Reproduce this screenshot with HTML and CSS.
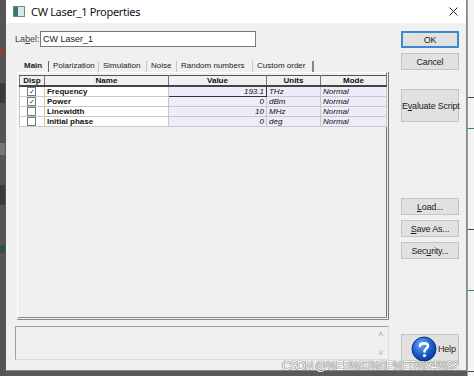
FILE: index.html
```html
<!DOCTYPE html>
<html>
<head>
    <title>CW Laser_1 Properties</title>
    <link rel="stylesheet" href="styles.css">
</head>
<body>
<div class="screen">
    <div class="side-left">
        <span class="mark m1"></span>
        <span class="mark m2"></span>
        <span class="mark m3"></span>
        <span class="mark m4"></span>
        <span class="mark m5"></span>
    </div>

    <div class="dialog">
        <div class="titlebar">
            <span class="app-icon"><span></span></span>
            <span class="title">CW Laser_1 Properties</span>
            <svg class="close" width="9" height="9" viewBox="0 0 9 9">
                <path d="M0.5 0.5 L8.5 8.5 M8.5 0.5 L0.5 8.5" stroke="#222" stroke-width="1"/>
            </svg>
        </div>

        <div class="dlg-body">
            <div class="main-col">
                <div class="label-row">
                    <label for="lbl">La<u>b</u>el:</label>
                    <input type="text" id="lbl" class="label-input" value="CW Laser_1">
                </div>

                <div class="tabs">
                    <span class="tab active t-main">Main</span>
                    <span class="tab t-pol">Polarization</span>
                    <span class="tab t-sim">Simulation</span>
                    <span class="tab t-noise">Noise</span>
                    <span class="tab t-rand">Random numbers</span>
                    <span class="tab last t-order">Custom order</span>
                </div>

                <div class="panel">
                    <table class="params">
                        <thead>
                            <tr>
                                <th class="c-disp">Disp</th>
                                <th class="c-name">Name</th>
                                <th class="c-value">Value</th>
                                <th class="c-units">Units</th>
                                <th class="c-mode">Mode</th>
                            </tr>
                        </thead>
                        <tbody>
                            <tr>
                                <td class="c-disp"><span class="chk on">&#x2713;</span></td>
                                <td class="c-name">Frequency</td>
                                <td class="c-value sel">193.1</td>
                                <td class="c-units">THz</td>
                                <td class="c-mode">Normal</td>
                            </tr>
                            <tr>
                                <td class="c-disp"><span class="chk on">&#x2713;</span></td>
                                <td class="c-name">Power</td>
                                <td class="c-value">0</td>
                                <td class="c-units">dBm</td>
                                <td class="c-mode">Normal</td>
                            </tr>
                            <tr>
                                <td class="c-disp"><span class="chk"></span></td>
                                <td class="c-name">Linewidth</td>
                                <td class="c-value">10</td>
                                <td class="c-units">MHz</td>
                                <td class="c-mode">Normal</td>
                            </tr>
                            <tr>
                                <td class="c-disp"><span class="chk"></span></td>
                                <td class="c-name">Initial phase</td>
                                <td class="c-value">0</td>
                                <td class="c-units">deg</td>
                                <td class="c-mode">Normal</td>
                            </tr>
                        </tbody>
                    </table>
                </div>

                <div class="message">
                    <div class="scroll">
                        <span>&#x2c4;</span>
                        <span>&#x2c5;</span>
                    </div>
                </div>
            </div>

            <div class="btn-col">
                <button type="button" class="btn ok">OK</button>
                <button type="button" class="btn cancel">Cancel</button>
                <button type="button" class="btn eval">E<u>v</u>aluate Script</button>
                <button type="button" class="btn load"><u>L</u>oad...</button>
                <button type="button" class="btn save"><u>S</u>ave As...</button>
                <button type="button" class="btn security">Sec<u>u</u>rity...</button>
                <button type="button" class="btn help">
                    <svg width="26" height="26" viewBox="0 0 26 26">
                        <defs>
                            <radialGradient id="hg" cx="40%" cy="30%" r="70%">
                                <stop offset="0" stop-color="#6fa8f2"/>
                                <stop offset="0.6" stop-color="#1e5fd0"/>
                                <stop offset="1" stop-color="#0b3a94"/>
                            </radialGradient>
                        </defs>
                        <circle cx="13" cy="13" r="12" fill="url(#hg)" stroke="#0a2f7a" stroke-width="1"/>
                        <path d="M9 10 C9 6.5 17 6.5 17 10 C17 12.5 13.5 12.5 13.5 15.5" fill="none" stroke="#fff" stroke-width="2.6" stroke-linecap="round"/>
                        <circle cx="13.5" cy="19.5" r="1.6" fill="#fff"/>
                    </svg>
                    <span>Help</span>
                </button>
            </div>
        </div>
        <div class="watermark">CSDN @%E5%90%8E%E5%84%92</div>
    </div>

    <div class="side-right">
        <span class="rline r1"></span>
        <span class="rline r2"></span>
        <span class="rline r3"></span>
        <span class="rline r4"></span>
        <span class="rline r5"></span>
    </div>
</div>
</body>
</html>
```

FILE: styles.css
```css
body {
    margin: 0;
    font-family: "Liberation Sans", Arial, sans-serif;
    background-color: #5a5a5a;
}

.screen {
    display: flex;
    width: 474px;
    height: 376px;
    overflow: hidden;
}

/* strips of the desktop behind the dialog */
.side-left {
    width: 6px;
    background-color: #555;
    display: flex;
    flex-direction: column;
}
.mark {
    display: block;
    width: 5px;
}
.m1 { height: 3px; margin-top: 50px; background: #b03030; }
.m2 { height: 20px; margin-top: 30px; background: #3a3a3a; }
.m3 { height: 12px; margin-top: 40px; background: #777; }
.m4 { height: 20px; margin-top: 30px; background: #3a3a3a; }
.m5 { height: 8px; margin-top: 40px; background: #2f4f4f; }

.side-right {
    width: 6px;
    background-color: #f4f4f4;
    border-left: 1px solid #999;
    display: flex;
    flex-direction: column;
}
.rline {
    display: block;
    height: 1px;
    background: #444;
}
.r1 { margin-top: 97px; }
.r2 { margin-top: 30px; background: #2a8a6a; }
.r3 { margin-top: 100px; }
.r4 { margin-top: 60px; background: #2a8a6a; }
.r5 { margin-top: 80px; }

.dialog {
    width: 461px;
    height: 370px;
    background-color: #f0f0f0;
    border-right: 1px solid #888;
    border-bottom: 1px solid #888;
    position: relative;
}

.titlebar {
    height: 23px;
    background-color: #fff;
    display: flex;
    align-items: center;
    font-family: "Noto Sans", "Open Sans", sans-serif;
    font-size: 11px;
    letter-spacing: -0.3px;
    color: #111;
}
.app-icon {
    width: 10px;
    height: 9px;
    margin-left: 7px;
    margin-right: 6px;
    border: 1px solid #6a8a8a;
    background: #d9e6e6;
    display: flex;
}
.app-icon span {
    width: 4px;
    background: #2e7a6e;
}
.title {
    flex: 1;
}
.close {
    margin-right: 8px;
}

.dlg-body {
    display: flex;
}

.main-col {
    width: 383px;
    padding-left: 9px;
}

.label-row {
    display: flex;
    align-items: center;
    margin-top: 8px;
    font-size: 9px;
    color: #444;
}
.label-row label {
    width: 25px;
    white-space: nowrap;
}
.label-input {
    width: 216px;
    height: 16px;
    box-sizing: border-box;
    border: 1px solid #7a7a7a;
    background: #fff;
    font-family: "Liberation Sans", Arial, sans-serif;
    font-size: 9px;
    padding: 0 2px;
    color: #222;
}

.tabs {
    display: flex;
    margin-top: 11px;
    margin-left: 2px;
    height: 14px;
    align-items: flex-end;
    font-size: 8px;
    color: #222;
}
.tab {
    box-sizing: border-box;
    padding: 0 0 2px 4px;
    border-right: 1px solid #c8c8c8;
    height: 11px;
    white-space: nowrap;
}
.tab.active {
    font-weight: bold;
    border-right: 1px solid #666;
    padding-left: 7px;
}
.tab.last {
    border-right: 2px solid #888;
}
.t-main { width: 32px; }
.t-pol { width: 50px; }
.t-sim { width: 48px; }
.t-noise { width: 30px; }
.t-rand { width: 76px; }
.t-order { width: 61px; }

.panel {
    width: 372px;
    height: 248px;
    box-sizing: border-box;
    margin-left: 2px;
    border-top: 1px solid #fff;
    border-left: 1px solid #fff;
    border-right: 3px double #777;
    border-bottom: 3px double #888;
    padding: 2px 0 0 1px;
}

.params {
    border-collapse: collapse;
    font-size: 8px;
    color: #111;
    table-layout: fixed;
    width: 368px;
}
.params th {
    height: 9px;
    padding: 0;
    font-weight: bold;
    text-align: center;
    border: 1px solid #777;
    border-top: 1px solid #555;
    border-bottom: 2px solid #444;
    background: #f0f0f0;
    line-height: 9px;
}
.params td {
    height: 7px;
    padding: 0 2px;
    border: 1px solid #c8c8c8;
    line-height: 7px;
}
.params .c-disp { width: 24px; padding: 0; text-align: center; }
.params .c-name { width: 123px; }
.params .c-value { width: 97px; }
.params .c-units { width: 53px; }
.params td.c-name { font-weight: bold; background: #fff; }
.params td.c-value {
    text-align: right;
    background: #ececfa;
    font-style: italic;
}
.params td.c-value.sel {
    border: 1px solid #333;
}
.params td.c-units,
.params td.c-mode {
    font-style: italic;
    background: #ececfa;
}
.params td.c-disp { background: #fff; }

.chk {
    display: inline-block;
    width: 7px;
    height: 7px;
    border: 1px solid #777;
    background: #fff;
    font-size: 7px;
    line-height: 7px;
    color: #333;
    vertical-align: middle;
}

.message {
    width: 374px;
    height: 34px;
    box-sizing: border-box;
    margin-top: 6px;
    border: 1px solid #a0a0a0;
    border-right-color: #ddd;
    border-bottom-color: #ddd;
    display: flex;
    justify-content: flex-end;
}
.scroll {
    width: 10px;
    display: flex;
    flex-direction: column;
    justify-content: space-between;
    align-items: center;
    font-size: 9px;
    color: #aaa;
    padding: 2px 2px 1px 0;
}

.btn-col {
    display: flex;
    flex-direction: column;
    margin-left: 3px;
    padding-top: 8px;
}
.btn {
    width: 58px;
    height: 17px;
    box-sizing: border-box;
    border: 1px solid #c4c4c4;
    background: #e1e1e1;
    font-family: "Liberation Sans", Arial, sans-serif;
    font-size: 9px;
    letter-spacing: -0.2px;
    white-space: nowrap;
    color: #222;
    padding: 0;
    margin-bottom: 5px;
}
.btn.ok {
    border: 2px solid #3c8ad0;
}
.btn.eval {
    height: 33px;
    margin-top: 14px;
}
.btn.load {
    margin-top: 71px;
}
.btn.help {
    height: 29px;
    margin-top: 70px;
    display: flex;
    align-items: center;
    padding-left: 9px;
    gap: 1px;
}

.watermark {
    position: absolute;
    right: 8px;
    bottom: -3px;
    font-size: 12px;
    color: #fff;
    letter-spacing: -0.9px;
    text-shadow: 0 0 1px #555, 0 0 1px #555;
}
```
